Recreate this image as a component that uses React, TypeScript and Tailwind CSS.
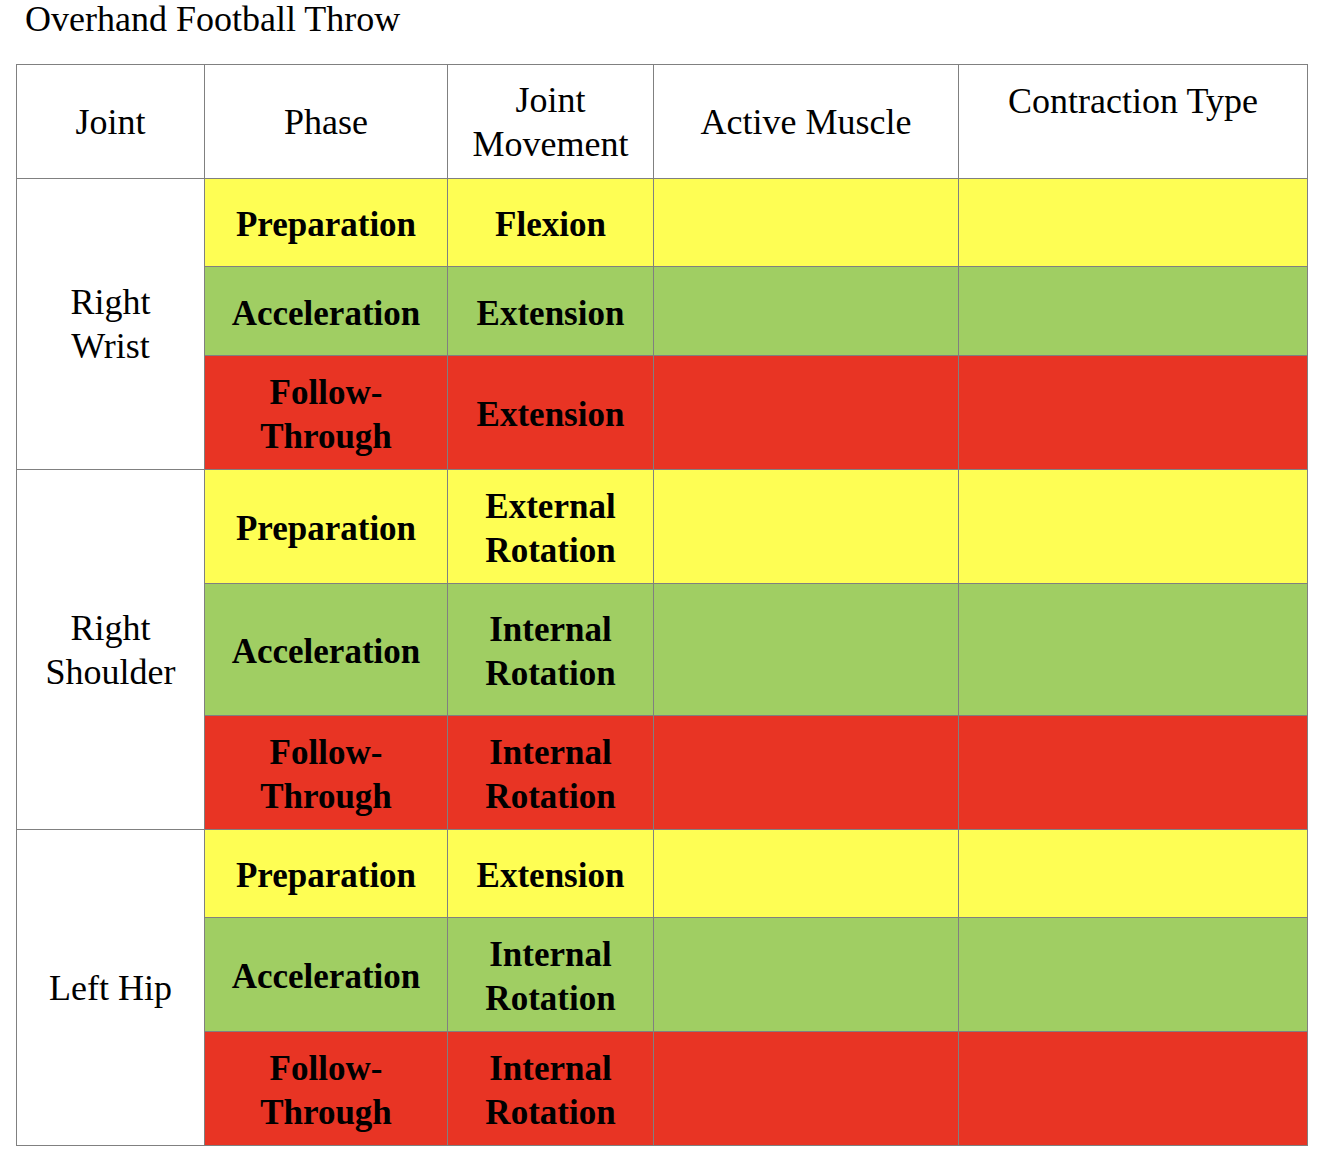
const YELLOW = "bg-[#fefe54]";
const GREEN = "bg-[#a0ce63]";
const RED = "bg-[#e83424]";

type Row = { phase: string[]; move: string[]; color: string; h: string };

const groups: { joint: string[]; rows: Row[] }[] = [
  {
    joint: ["Right", "Wrist"],
    rows: [
      { phase: ["Preparation"], move: ["Flexion"], color: YELLOW, h: "h-[88px]" },
      { phase: ["Acceleration"], move: ["Extension"], color: GREEN, h: "h-[89px]" },
      { phase: ["Follow-", "Through"], move: ["Extension"], color: RED, h: "h-[114px]" },
    ],
  },
  {
    joint: ["Right", "Shoulder"],
    rows: [
      { phase: ["Preparation"], move: ["External", "Rotation"], color: YELLOW, h: "h-[114px]" },
      { phase: ["Acceleration"], move: ["Internal", "Rotation"], color: GREEN, h: "h-[132px]" },
      { phase: ["Follow-", "Through"], move: ["Internal", "Rotation"], color: RED, h: "h-[114px]" },
    ],
  },
  {
    joint: ["Left Hip"],
    rows: [
      { phase: ["Preparation"], move: ["Extension"], color: YELLOW, h: "h-[88px]" },
      { phase: ["Acceleration"], move: ["Internal", "Rotation"], color: GREEN, h: "h-[114px]" },
      { phase: ["Follow-", "Through"], move: ["Internal", "Rotation"], color: RED, h: "h-[114px]" },
    ],
  },
];

function Lines({ items }: { items: string[] }) {
  return (
    <>
      {items.map((t, i) => (
        <div key={i}>{t}</div>
      ))}
    </>
  );
}

const cell = "border border-[#808080] text-center align-middle p-0";

export default function App() {
  return (
    <div className="min-h-screen bg-white text-black font-['Liberation_Serif','Times_New_Roman',serif] text-[36px] leading-[44px]">
      <div className="pl-[25px] pt-[3px] leading-[32px]">Overhand Football Throw</div>
      <table className="mt-[29px] ml-[16px] w-[1291px] table-fixed border-collapse">
        <colgroup>
          <col className="w-[188px]" />
          <col className="w-[243px]" />
          <col className="w-[206px]" />
          <col className="w-[305px]" />
          <col className="w-[349px]" />
        </colgroup>
        <thead>
          <tr className="h-[114px]">
            <th className={`${cell} font-normal`}>Joint</th>
            <th className={`${cell} font-normal`}>Phase</th>
            <th className={`${cell} font-normal`}>
              <div>Joint</div>
              <div>Movement</div>
            </th>
            <th className={`${cell} font-normal`}>Active Muscle</th>
            <th className="border border-[#808080] text-center align-top pt-[14px] font-normal">Contraction Type</th>
          </tr>
        </thead>
        <tbody>
          {groups.map((g, gi) =>
            g.rows.map((r, ri) => (
              <tr key={`${gi}-${ri}`} className={r.h}>
                {ri === 0 && (
                  <td rowSpan={3} className={`${cell} bg-white`}>
                    <Lines items={g.joint} />
                  </td>
                )}
                <td className={`${cell} ${r.color} font-bold text-[35px] pt-[5px]`}>
                  <Lines items={r.phase} />
                </td>
                <td className={`${cell} ${r.color} font-bold text-[35px] pt-[5px]`}>
                  <Lines items={r.move} />
                </td>
                <td className={`${cell} ${r.color}`}></td>
                <td className={`${cell} ${r.color}`}></td>
              </tr>
            ))
          )}
        </tbody>
      </table>
    </div>
  );
}
